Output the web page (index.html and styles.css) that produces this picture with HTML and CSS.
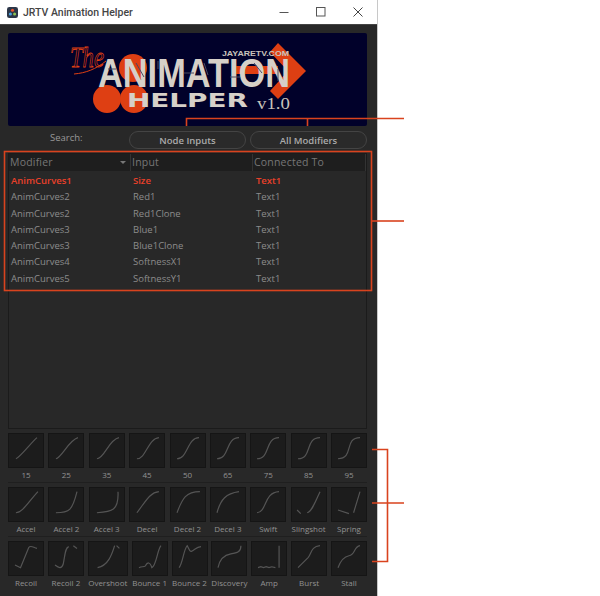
FILE: index.html
```html
<!DOCTYPE html>
<html lang="en">
<head>
    <meta charset="UTF-8">
    <meta name="viewport" content="width=device-width, initial-scale=1.0">
    <title>JRTV Animation Helper</title>
    <link rel="stylesheet" href="styles.css">
</head>
<body>
    <div class="window">
        <div class="titlebar">
            <svg class="app-icon" viewBox="0 0 12 12">
                <rect width="12" height="12" rx="2.5" fill="#2b3648"/>
                <circle cx="6" cy="3.6" r="1.7" fill="#e8552f"/>
                <circle cx="3.7" cy="7.6" r="1.7" fill="#4aa3df"/>
                <circle cx="8.3" cy="7.6" r="1.7" fill="#8cc152"/>
            </svg>
            <span class="app-title">JRTV Animation Helper</span>
            <div class="win-controls">
                <svg viewBox="0 0 10 10"><path d="M0.5 5.5H9.5" stroke="#555" fill="none"/></svg>
                <svg viewBox="0 0 10 10"><rect x="0.5" y="0.5" width="8.5" height="8.5" stroke="#555" fill="none"/></svg>
                <svg viewBox="0 0 10 10"><path d="M0.5 0.5L9.5 9.5M9.5 0.5L0.5 9.5" stroke="#444" fill="none"/></svg>
            </div>
        </div>

        <div class="app">
            <svg class="banner" viewBox="0 0 359 93">
                <rect width="359" height="93" fill="#01012a"/>
                <circle cx="99" cy="66" r="14" fill="#de3f13"/>
                <circle cx="126" cy="66" r="14" fill="#de3f13"/>
                <circle cx="125" cy="35" r="14" fill="#de3f13"/>
                <path d="M224 33H270V41H224Z" fill="#de3f13"/>
                <path d="M270 10L298 38L270 66L262 58L280 38L262 19Z" fill="#de3f13"/>
                <text class="b-the" x="62" y="34" textLength="34" lengthAdjust="spacingAndGlyphs">The</text>
                <path class="b-swash" d="M66 41C78 40 88 36 98 28"/>
                <text class="b-site" x="214" y="23" textLength="67" lengthAdjust="spacingAndGlyphs">JAYARETV.COM</text>
                <text class="b-main" x="90" y="54" textLength="192" lengthAdjust="spacingAndGlyphs">ANIMATION</text>
                <path class="b-wear" d="M100 36H108M128 30L136 44M150 28V36M176 40H186M196 30L200 42M222 44H232M246 30L254 40M270 36V48"/>
                <text class="b-helper" x="119" y="74" textLength="121" lengthAdjust="spacingAndGlyphs">HELPER</text>
                <text class="b-version" x="249" y="76" textLength="33" lengthAdjust="spacingAndGlyphs">v1.0</text>
            </svg>

            <div class="search-row">
                <span class="search-label">Search:</span>
                <button class="pill">Node Inputs</button>
                <button class="pill">All Modifiers</button>
            </div>

            <div class="tree">
                <div class="tree-head">
                    <div class="head-cell">Modifier<span class="sort-arrow"></span></div>
                    <div class="head-cell">Input</div>
                    <div class="head-cell">Connected To</div>
                </div>
                <div class="tree-row selected"><span>AnimCurves1</span><span>Size</span><span>Text1</span></div>
                <div class="tree-row"><span>AnimCurves2</span><span>Red1</span><span>Text1</span></div>
                <div class="tree-row"><span>AnimCurves2</span><span>Red1Clone</span><span>Text1</span></div>
                <div class="tree-row"><span>AnimCurves3</span><span>Blue1</span><span>Text1</span></div>
                <div class="tree-row"><span>AnimCurves3</span><span>Blue1Clone</span><span>Text1</span></div>
                <div class="tree-row"><span>AnimCurves4</span><span>SoftnessX1</span><span>Text1</span></div>
                <div class="tree-row"><span>AnimCurves5</span><span>SoftnessY1</span><span>Text1</span></div>
            </div>

            <!-- Ease percentages -->
            <div class="preset-row">
                <div class="preset"><svg class="tile" viewBox="0 0 36 36"><path d="M7 27C11 26 24 9 30 4"/></svg><span>15</span></div>
                <div class="preset"><svg class="tile" viewBox="0 0 36 36"><path d="M7 27C13 26 21 7 31 4"/></svg><span>25</span></div>
                <div class="preset"><svg class="tile" viewBox="0 0 36 36"><path d="M7 27C15 27 20 6 31 4"/></svg><span>35</span></div>
                <div class="preset"><svg class="tile" viewBox="0 0 36 36"><path d="M7 27C17 27 19 5 31 4"/></svg><span>45</span></div>
                <div class="preset"><svg class="tile" viewBox="0 0 36 36"><path d="M6 27C18 27 17 4 30 4"/></svg><span>50</span></div>
                <div class="preset"><svg class="tile" viewBox="0 0 36 36"><path d="M6 27C20 27 15 4 30 4"/></svg><span>65</span></div>
                <div class="preset"><svg class="tile" viewBox="0 0 36 36"><path d="M6 27C21 27 14 4 30 4"/></svg><span>75</span></div>
                <div class="preset"><svg class="tile" viewBox="0 0 36 36"><path d="M6 27C22 27 13 4 30 4"/></svg><span>85</span></div>
                <div class="preset"><svg class="tile" viewBox="0 0 36 36"><path d="M6 27C24 27 12 4 30 4"/></svg><span>95</span></div>
            </div>

            <!-- Accel and decel -->
            <div class="preset-row">
                <div class="preset"><svg class="tile" viewBox="0 0 36 36"><path d="M7 27C14 27 20 16 31 4"/></svg><span>Accel</span></div>
                <div class="preset"><svg class="tile" viewBox="0 0 36 36"><path d="M7 27C22 27 25 24 30 4"/></svg><span>Accel 2</span></div>
                <div class="preset"><svg class="tile" viewBox="0 0 36 36"><path d="M7 27C24 26 31 24 30 4"/></svg><span>Accel 3</span></div>
                <div class="preset"><svg class="tile" viewBox="0 0 36 36"><path d="M7 27C17 14 21 5 31 4"/></svg><span>Decel</span></div>
                <div class="preset"><svg class="tile" viewBox="0 0 36 36"><path d="M6 27C12 11 16 4 31 4"/></svg><span>Decel 2</span></div>
                <div class="preset"><svg class="tile" viewBox="0 0 36 36"><path d="M6 27C10 12 16 6 30 4"/></svg><span>Decel 3</span></div>
                <div class="preset"><svg class="tile" viewBox="0 0 36 36"><path d="M6 27C17 26 13 5 30 4"/></svg><span>Swift</span></div>
                <div class="preset"><svg class="tile" viewBox="0 0 36 36"><path d="M5 24L9 28M16 27C21 26 25 15 30 4"/></svg><span>Slingshot</span></div>
                <div class="preset"><svg class="tile" viewBox="0 0 36 36"><path d="M6 24L18 28M23 27L30 4"/></svg><span>Spring</span></div>
            </div>

            <!-- Overshoots and bounces -->
            <div class="preset-row last">
                <div class="preset"><svg class="tile" viewBox="0 0 36 36"><path d="M6 25L12 28L21 6C23 3 26 6 30 7"/></svg><span>Recoil</span></div>
                <div class="preset"><svg class="tile" viewBox="0 0 36 36"><path d="M6 25C10 28 13 30 15 24C17 14 17 6 21 5M26 4L30 7"/></svg><span>Recoil 2</span></div>
                <div class="preset wide"><svg class="tile" viewBox="0 0 40 36" preserveAspectRatio="none"><path d="M9 28C20 26 24 14 27 4M29 4L32 7"/></svg><span>Overshoot</span></div>
                <div class="preset"><svg class="tile" viewBox="0 0 36 36"><path d="M6 28C9 26 11 28 13 26C15 22 18 21 20 28C25 26 26 8 30 4"/></svg><span>Bounce 1</span></div>
                <div class="preset"><svg class="tile" viewBox="0 0 36 36"><path d="M6 28C10 24 11 8 15 4C17 8 18 11 20 10C23 9 25 5 30 5"/></svg><span>Bounce 2</span></div>
                <div class="preset"><svg class="tile" viewBox="0 0 36 36"><path d="M6 28C8 18 14 14 20 13C27 12 31 11 31 4"/></svg><span>Discovery</span></div>
                <div class="preset"><svg class="tile" viewBox="0 0 36 36"><path d="M6 28L9 27L12 28L15 27L18 28L21 27L25 28M29 28L29 4"/></svg><span>Amp</span></div>
                <div class="preset"><svg class="tile" viewBox="0 0 36 36"><path d="M6 28L17 17C21 12 20 5 30 4"/></svg><span>Burst</span></div>
                <div class="preset"><svg class="tile" viewBox="0 0 36 36"><path d="M6 28C9 20 12 16 18 15C25 14 23 5 30 4"/></svg><span>Stall</span></div>
            </div>
        </div>
    </div>

    <!-- Red callouts drawn over the window -->
    <svg class="callouts" viewBox="0 0 600 596">
        <path d="M186.5 126V118.5H404M307.5 118.5V126"/>
        <rect x="4.5" y="151.5" width="367" height="139"/>
        <path d="M372 221H404"/>
        <path d="M372 449.5H387.5V561.5H372M372 503H404"/>
    </svg>
</body>
</html>
```

FILE: styles.css
```css
body {
    margin: 0;
    width: 600px;
    height: 596px;
    overflow: hidden;
    position: relative;
    background: #fff;
    font-family: "Open Sans", "Noto Sans", sans-serif;
}
.window {
    width: 378px;
    height: 596px;
    border-right: 1px solid #c8c8c8;
    box-sizing: border-box;
    display: flex;
    flex-direction: column;
}
.titlebar {
    height: 24px;
    flex: none;
    display: flex;
    align-items: center;
    padding-left: 7px;
    background: #fff;
}
.app-icon {
    width: 11px;
    height: 11px;
    margin-right: 5px;
}
.app-title {
    font: 500 10.5px Roboto, sans-serif;
    color: #444;
}
.win-controls {
    margin-left: auto;
    display: flex;
    gap: 27px;
    padding-right: 14px;
}
.win-controls svg {
    width: 10px;
    height: 10px;
}
.app {
    flex: 1;
    background: #282828;
    border-top: 1px solid #444;
    padding: 8px 10px 0 8px;
}
.banner {
    display: block;
    width: 359px;
    height: 93px;
    border-radius: 2px;
}
.b-the {
    font: italic 30px "Liberation Serif", serif;
    fill: none;
    stroke: #de3f13;
    stroke-width: 0.8;
}
.b-swash {
    fill: none;
    stroke: #de3f13;
}
.b-site {
    font: bold 8px "Liberation Sans", sans-serif;
    fill: #c9c3bb;
}
.b-main {
    font: bold 40px "Liberation Sans", sans-serif;
    fill: #d6d0c8;
}
.b-wear {
    fill: none;
    stroke: #4a4a60;
    stroke-width: 1;
}
.b-helper {
    font: bold 19px "DejaVu Sans", sans-serif;
    fill: #d6d0c8;
}
.b-version {
    font: 17px "Liberation Serif", serif;
    fill: #c9c3bb;
}
.search-row {
    display: flex;
    align-items: center;
    gap: 4px;
    margin-top: 5px;
    height: 18px;
}
.search-label {
    width: 117px;
    box-sizing: border-box;
    padding: 0 0 5px 42px;
    font-size: 9.5px;
    color: #999;
}
.pill {
    width: 117px;
    height: 18px;
    padding: 0;
    border: 1px solid #444;
    border-radius: 9px;
    background: #2a2a2a;
    color: #aaa;
    font: 600 9.5px "Open Sans", sans-serif;
}
.tree {
    margin-top: 4px;
    height: 276px;
    box-sizing: border-box;
    border: 1px solid #1b1b1b;
}
.tree-head,
.tree-row {
    display: grid;
    grid-template-columns: 122px 122px 1fr;
}
.tree-head {
    height: 17px;
    background: #1e1e1e;
    margin-bottom: 2px;
}
.head-cell {
    position: relative;
    padding-left: 1px;
    border-right: 1px solid #333;
    font-size: 10.5px;
    line-height: 17px;
    letter-spacing: 0.2px;
    color: #777;
}
.sort-arrow {
    position: absolute;
    right: 4px;
    top: 7px;
    border-left: 3px solid transparent;
    border-right: 3px solid transparent;
    border-top: 3px solid #777;
}
.tree-row {
    height: 16.3px;
    font-size: 9.5px;
    line-height: 16.3px;
    color: #8c8c8c;
}
.tree-row span {
    padding-left: 2px;
}
.tree-row span:last-child {
    padding-left: 3px;
}
.tree-row.selected {
    color: #e8402a;
    font-weight: 600;
}
.preset-row {
    display: flex;
    justify-content: space-between;
    margin-top: 4px;
    height: 49px;
    border-bottom: 1px solid #1f1f1f;
}
.preset-row.last {
    border-bottom: none;
}
.preset {
    width: 36px;
    display: flex;
    flex-direction: column;
    align-items: center;
}
.preset.wide {
    width: 40px;
}
.preset span {
    font-size: 8px;
    line-height: 14px;
    white-space: nowrap;
    color: #929292;
}
.tile {
    display: block;
    width: 100%;
    height: 35px;
    flex: none;
    box-sizing: border-box;
    background: #1c1c1c;
    border: 1px solid #151515;
}
.tile path {
    fill: none;
    stroke: #555;
    stroke-width: 1.3;
}
.callouts {
    position: absolute;
    left: 0;
    top: 0;
    width: 600px;
    height: 596px;
}
.callouts path,
.callouts rect {
    fill: none;
    stroke: #d9431e;
    stroke-width: 1.6;
}
```
